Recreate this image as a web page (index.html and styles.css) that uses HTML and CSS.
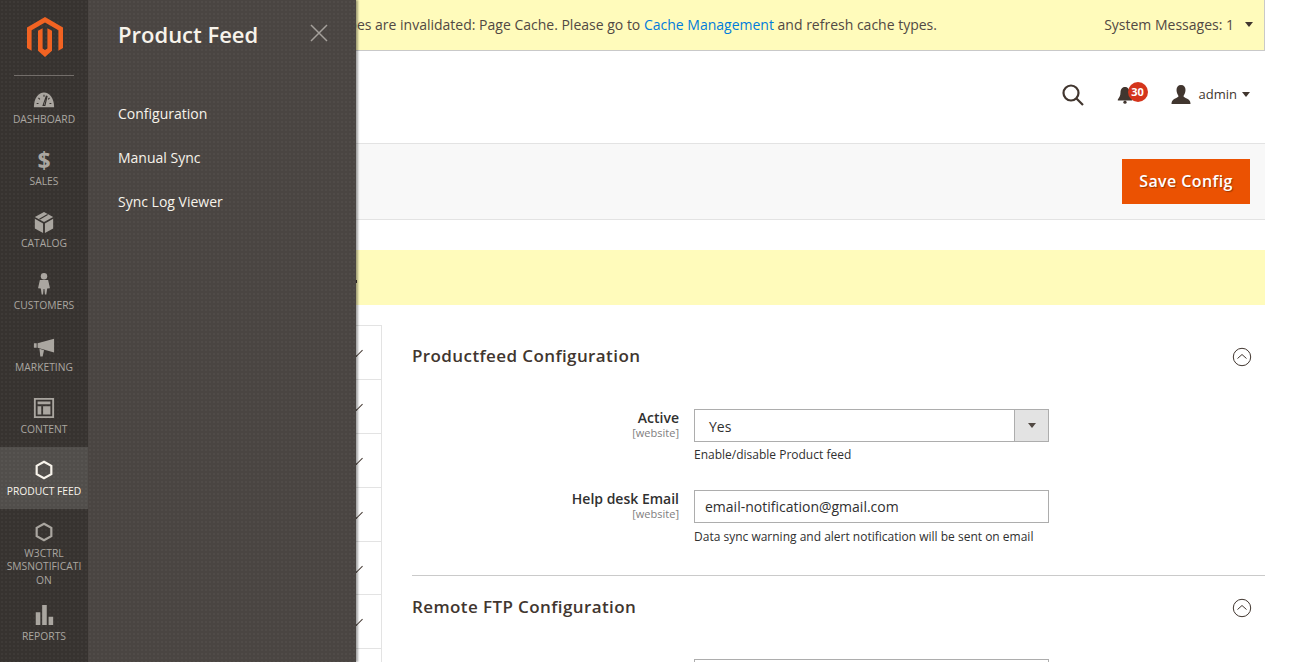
FILE: index.html
```html
<!DOCTYPE html>
<html lang="en">
<head>
<meta charset="utf-8">
<title>Configuration</title>
<link rel="stylesheet" href="styles.css">
</head>
<body>
<div class="app">
  <nav class="nav">
    <div class="logo">
      <svg width="36" height="41" viewBox="0 0 36 41"><path fill="#f26322" d="M18 0 36 10.400V31l-4.600 2.700V13.200L18 5.500 4.600 13.200v20.500L0 31V10.400Z"/><path fill="#f26322" d="M20.400 11.200 25 13.800v20L18 40l-7-6.200v-20l4.600-2.600v20.200L18 33l2.400-1.600Z"/></svg>
    </div>
    <a class="item"><svg class="ico" viewBox="0 0 24 24"><path d="M1 22C1 12 6 6 12 6s11 6 11 16Z"/><path class="cut" d="M11 20 14.500 10l.8.3L13 20Z"/><path class="cut" d="M4 18h2M6 12l1.500 1.500M12 8.500v2M18 12l-1.500 1.500M20 18h-2"/></svg><span>Dashboard</span></a>
    <a class="item"><b class="glyph">$</b><span>Sales</span></a>
    <a class="item"><svg class="ico" viewBox="0 0 24 24"><path d="M12 1 22 6.500 12 12 2 6.500Z"/><path d="M2 8.500 11 13.500V24L2 19ZM22 8.500 13 13.500V24L22 19Z"/><path class="cut" d="M7 9 16 3.800"/></svg><span>Catalog</span></a>
    <a class="item"><svg class="ico" viewBox="0 0 24 24"><circle cx="12" cy="3.500" r="3.500"/><path d="M7.500 7.500h9l2 9-3 .500-1 6.500h-1.500l-.5-6h-1l-.5 6H9.500l-1-6.500-3-.500Z"/></svg><span>Customers</span></a>
    <a class="item"><svg class="ico" viewBox="0 0 24 24"><path d="M1 9h3v5H1ZM5 9 23 4V19L5 14Z"/><path d="M7 15l5 1.500-1.500 7H8Z"/></svg><span>Marketing</span></a>
    <a class="item"><svg class="ico" viewBox="0 0 24 24"><path fill-rule="evenodd" d="M1 1h22v22H1ZM3 3v18h18V3Z"/><path d="M5 5h14v3H5ZM5 10h4v9H5ZM11 10h8v9h-8Z"/></svg><span>Content</span></a>
    <a class="item item-active"><svg class="ico hex" viewBox="0 0 24 24"><path d="M12 3 20 7.500V16.500L12 21 4 16.500V7.500Z"/></svg><span>Product Feed</span></a>
    <a class="item item-long"><svg class="ico hex" viewBox="0 0 24 24"><path d="M12 3 20 7.500V16.500L12 21 4 16.500V7.500Z"/></svg><span>W3ctrl Smsnotificati<br>on</span></a>
    <a class="item"><svg class="ico" viewBox="0 0 24 24"><path d="M3 9h5v14H3ZM10 1h5v22h-5ZM17 14h5v9h-5Z"/></svg><span>Reports</span></a>
  </nav>

  <aside class="flyout">
    <div class="fly-head">
      <h2>Product Feed</h2>
      <svg class="fly-close" width="18" height="18" viewBox="0 0 18 18"><path d="M1 1 17 17M17 1 1 17"/></svg>
    </div>
    <ul class="fly-links">
      <li>Configuration</li>
      <li>Manual Sync</li>
      <li>Sync Log Viewer</li>
    </ul>
  </aside>

  <main class="main">
    <div class="sysbar">
      <p class="sysmsg">One or more of the Cache Types are invalidated: Page Cache. Please go to <a>Cache Management</a> and refresh cache types.</p>
      <div class="syscount">System Messages: 1<i class="caret"></i></div>
    </div>

    <header class="top">
      <svg class="search" width="24" height="24" viewBox="0 0 24 24"><circle cx="10" cy="10" r="7.500"/><path d="M15.500 15.500 22 22"/></svg>
      <div class="bell">
        <svg width="16" height="18" viewBox="0 0 17 20"><path d="M8.500 1C5 1 3.500 4 3.500 7c0 4-1.500 6-3 8v1h16v-1c-1.500-2-3-4-3-8 0-3-1.500-6-5-6Z"/><circle cx="8.500" cy="18" r="1.800"/></svg>
        <span class="badge">30</span>
      </div>
      <div class="user">
        <svg width="20" height="19" viewBox="0 0 20 19"><path d="M10 0c3 0 4.500 2 4.500 5S13 10 12.500 11c0 1.500 3 2 5 3.500 1.500 1 2 3 2 4.500H.5c0-1.500.5-3.500 2-4.500 2-1.500 5-2 5-3.500C7 10 5.500 8 5.500 5S7 0 10 0Z"/></svg>
        <span>admin</span>
        <i class="caret"></i>
      </div>
    </header>

    <div class="actions"><button class="save" type="button">Save Config</button></div>

    <div class="content">
      <div class="notice"><i class="notice-tail"></i></div>
      <div class="columns">
        <ul class="tabs">
          <li><i class="chev"></i></li>
          <li><i class="chev"></i></li>
          <li><i class="chev"></i></li>
          <li><i class="chev"></i></li>
          <li><i class="chev"></i></li>
          <li><i class="chev"></i></li>
          <li></li>
        </ul>
        <div class="form">
          <section class="sec">
            <div class="sec-head">
              <h3>Productfeed Configuration</h3>
              <svg class="toggle" width="20" height="20" viewBox="0 0 20 20"><circle cx="10" cy="10" r="8.700"/><path d="M5.500 11.500 10 7.500l4.500 4"/></svg>
            </div>
            <div class="row row-active">
              <div class="lab"><label>Active</label><small>[website]</small></div>
              <div class="ctl">
                <div class="select"><span>Yes</span><b class="sel-btn"><i></i></b></div>
                <p class="note">Enable/disable Product feed</p>
              </div>
            </div>
            <div class="row row-mail">
              <div class="lab"><label>Help desk Email</label><small>[website]</small></div>
              <div class="ctl">
                <div class="input">email-notification@gmail.com</div>
                <p class="note note-mail">Data sync warning and alert notification will be sent on email</p>
              </div>
            </div>
          </section>
          <section class="sec sec-next">
            <div class="sec-head sec-head-next">
              <h3>Remote FTP Configuration</h3>
              <svg class="toggle" width="20" height="20" viewBox="0 0 20 20"><circle cx="10" cy="10" r="8.700"/><path d="M5.500 11.500 10 7.500l4.500 4"/></svg>
            </div>
            <div class="row"><div class="lab"></div><div class="ctl"><div class="input"></div></div></div>
          </section>
        </div>
      </div>
    </div>
  </main>
</div>
</body>
</html>
```
FILE: styles.css
```css
* { box-sizing: border-box; }
html, body { margin: 0; height: 100%; overflow: hidden; background: #fff; }
body { font-family: "Open Sans", sans-serif; color: #41362f; font-size: 14px; }
p, h2, h3, ul { margin: 0; padding: 0; }
ul { list-style: none; }

.app { position: relative; display: flex; width: 1295px; height: 662px; overflow: hidden; }

/* left navigation */
.nav { flex: 0 0 88px; background: #373330 radial-gradient(rgba(255,255,255,.035) 1px, transparent 1px) 0 0 / 4px 4px; display: flex; flex-direction: column; }
.logo { height: 75px; flex: none; padding: 17px 0 0 1px; position: relative; }
.logo svg { display: block; margin: 0 auto; }
.logo::after { content: ""; position: absolute; left: 14px; right: 14px; bottom: -1px; height: 1px; background: #736e6a; }
.item { display: flex; flex-direction: column; align-items: center; flex: none; height: 62px; padding-top: 12px; color: #aaa6a0; font-size: 10.3px; line-height: 13px; text-transform: uppercase; text-align: center; }
.item .ico { display: block; width: 22px; height: 22px; margin-bottom: 3.500px; fill: #aaa6a0; flex: none; }
.item .glyph { display: block; flex: none; height: 22px; margin-bottom: 3.500px; font-size: 23px; font-weight: 700; line-height: 23px; color: #aaa6a0; }
.ico .cut { fill: none; stroke: #373330; stroke-width: 1.200; }
.ico.hex { fill: none; stroke: #aaa6a0; stroke-width: 2.400; }
.item-active { background: #514e4b radial-gradient(rgba(255,255,255,.035) 1px, transparent 1px) 0 0 / 4px 4px; color: #f7f3eb; }
.item-active .ico.hex { stroke: #f7f3eb; }
.item-long { height: 83px; line-height: 13.500px; }

/* flyout */
.flyout { position: absolute; z-index: 5; left: 88px; top: 0; bottom: 0; width: 268px; background: #4a4542 radial-gradient(rgba(255,255,255,.03) 1px, transparent 1px) 0 0 / 4px 4px; box-shadow: 2px 0 2px rgba(0,0,0,.35); color: #f7f3eb; }
.fly-head { display: flex; align-items: center; justify-content: space-between; height: 68px; padding: 0 28px 0 30px; }
.fly-head h2 { font-size: 22px; font-weight: 600; color: #f7f3eb; }
.fly-close { fill: none; stroke: #a5a09b; stroke-width: 1.500; margin-top: -2px; }
.fly-links { padding: 24px 0 0 30px; }
.fly-links li { height: 44px; line-height: 44px; font-size: 14px; color: #f7f3eb; }

/* main column */
.main { flex: 0 0 1177px; min-width: 0; display: flex; flex-direction: column; }
.sysbar { height: 51px; flex: none; display: flex; align-items: center; justify-content: space-between; background: #fffbbb; border-right: 1px solid #c9c9c9; border-bottom: 1px solid #c9c9c9; padding: 0 11px 2px 73px; white-space: nowrap; }
.sysmsg { color: #514943; font-size: 14px; }
.sysmsg a { color: #007bdb; }
.syscount { display: flex; align-items: center; color: #514943; font-size: 14px; }
.caret { display: block; width: 0; height: 0; border: 4.500px solid transparent; border-top: 5px solid #41362f; border-bottom: 0; }
.syscount .caret { margin-left: 11px; }

.top { height: 92px; flex: none; display: flex; align-items: center; padding: 0 15px 4px 0; justify-content: flex-end; }
.search { fill: none; stroke: #41362f; stroke-width: 2.200; margin-right: 32px; }
.bell { position: relative; width: 17px; height: 18px; margin-right: 37px; }
.bell svg { display: block; fill: #41362f; }
.badge { position: absolute; left: 11px; top: -4px; width: 20px; height: 20px; border-radius: 50%; background: #d4351c; color: #fff; font-size: 11px; font-weight: 700; line-height: 20px; text-align: center; }
.user { display: flex; align-items: center; margin-bottom: 2px; font-size: 13px; color: #41362f; }
.user svg { fill: #41362f; margin-right: 8px; }
.user .caret { margin-left: 5px; }

.actions { height: 77px; flex: none; display: flex; align-items: center; justify-content: flex-end; padding-right: 15px; background: #f8f8f8; border-top: 1px solid #e3e3e3; border-bottom: 1px solid #e3e3e3; }
.save { width: 128px; height: 45px; padding: 0 0 2px; border: 0; background: #eb5202; color: #fff; font: 600 16px "Open Sans", sans-serif; letter-spacing: .4px; text-shadow: 1px 1px 1px rgba(0,0,0,.35); }

.content { flex: 1; min-height: 0; padding: 30px 0 0 0; }
.notice { height: 55px; display: flex; align-items: center; padding: 8px 0 0 268px; background: #fffbbb; }
.notice-tail { display: block; width: 1px; height: 3px; background: #41362f; }
.columns { display: flex; padding: 20px 0 0 30px; gap: 30px; }
.tabs { flex: 0 0 264px; }
.tabs li { height: 54px; border: 1px solid #e3e3e3; border-bottom: 0; position: relative; }
.tabs li:nth-child(5) { height: 53px; }
.chev { position: absolute; right: 20.500px; top: 20px; width: 9px; height: 9px; border-right: 1px solid #41362f; border-bottom: 1px solid #41362f; transform: rotate(45deg); }
.form { flex: 1; min-width: 0; }

.sec-head { display: flex; align-items: center; justify-content: space-between; height: 62px; padding: 0 13px 2px 0; }
.sec-head h3 { font-size: 17px; font-weight: 600; letter-spacing: .4px; color: #41362f; }
.sec-head .toggle { fill: none; stroke: #41362f; stroke-width: 1; margin-top: 4px; }
.sec-head-next .toggle { margin-top: 2px; }
.row { display: flex; gap: 15px; }
.row-active { margin-top: 22px; }
.row-mail { margin-top: 27px; }
.lab { flex: 0 0 267px; text-align: right; }
.lab label { display: block; font-size: 14px; font-weight: 600; line-height: 17px; color: #303030; }
.lab small { display: block; font-size: 11px; line-height: 13px; color: #808080; }
.ctl { flex: 0 0 355px; }
.select, .input { height: 33px; border: 1px solid #adadad; background: #fff; display: flex; align-items: center; font-size: 14px; color: #303030; }
.select { justify-content: space-between; padding-left: 14px; }
.select span { padding-top: 1px; }
.input { padding: 0 0 1px 10px; }
.sel-btn { width: 34px; height: 100%; background: #e3e3e3; border-left: 1px solid #adadad; display: flex; align-items: center; justify-content: center; }
.sel-btn i { width: 0; height: 0; border: 4.500px solid transparent; border-top: 5px solid #514943; border-bottom: 0; }
.note { font-size: 12px; line-height: 17px; color: #303030; margin-top: 4px; }
.note-mail { margin-top: 5px; }
.sec-next { border-top: 1px solid #cacaca; margin-top: 30px; }
.sec-head-next { height: 63px; }
.sec-next .row { margin-top: 20px; }
```
